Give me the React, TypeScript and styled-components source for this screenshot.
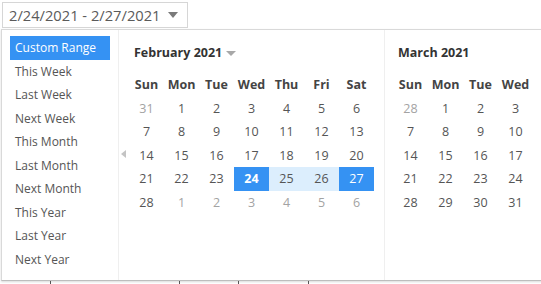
import styled, { createGlobalStyle } from "styled-components";

const GlobalStyle = createGlobalStyle`
  body {
    margin: 0;
    background: #fff;
    font-family: "Open Sans", "Noto Sans", sans-serif;
    overflow: hidden;
  }
`;

const RANGES = [
  "Custom Range",
  "This Week",
  "Last Week",
  "Next Week",
  "This Month",
  "Last Month",
  "Next Month",
  "This Year",
  "Last Year",
  "Next Year",
];

const DAYS = ["Sun", "Mon", "Tue", "Wed", "Thu", "Fri", "Sat"];

type Cell = { day: number; muted?: boolean; sel?: "start" | "mid" | "end" };

const febCells: Cell[] = [
  { day: 31, muted: true },
  ...Array.from({ length: 28 }, (_, i) => ({ day: i + 1 } as Cell)),
  ...[1, 2, 3, 4, 5, 6].map((d) => ({ day: d, muted: true })),
].map((c, i) => {
  if (i === 24) return { ...c, sel: "start" as const };
  if (i === 27) return { ...c, sel: "end" as const };
  if (i === 25 || i === 26) return { ...c, sel: "mid" as const };
  return c;
});

// March runs off the right edge of the window: only Sun-Wed are in view
const MAR_COLS = 4;
const marCells: Cell[] = [
  { day: 28, muted: true },
  ...Array.from({ length: 31 }, (_, i) => ({ day: i + 1 } as Cell)),
].filter((_, i) => i % 7 < MAR_COLS);

const App = () => {
  return (
    <Page>
      <GlobalStyle />
      <Picker>
        <PickerText>2/24/2021 - 2/27/2021</PickerText>
        <Caret />
      </Picker>
      <Popup>
        <Ranges>
          {RANGES.map((r, i) => (
            <RangeItem key={r} active={i === 0}>
              {r}
            </RangeItem>
          ))}
        </Ranges>
        <Month width={266} titleIndent={15} gridIndent={10}>
          <Title>
            February 2021 <TitleCaret />
          </Title>
          <PrevArrow />
          <DayGrid cols={7}>
            {DAYS.map((d) => (
              <Head key={d}>{d}</Head>
            ))}
            {febCells.map((c, i) => (
              <Day key={i} muted={c.muted} sel={c.sel}>
                {c.day}
              </Day>
            ))}
          </DayGrid>
        </Month>
        <Month width={156} titleIndent={13} gridIndent={8} last>
          <Title>March 2021</Title>
          <DayGrid cols={MAR_COLS}>
            {DAYS.slice(0, MAR_COLS).map((d) => (
              <Head key={d}>{d}</Head>
            ))}
            {marCells.map((c, i) => (
              <Day key={i} muted={c.muted}>
                {c.day}
              </Day>
            ))}
          </DayGrid>
        </Month>
      </Popup>
      <Ticks>
        <Tick />
        <Tick />
        <Tick />
        <Tick />
      </Ticks>
    </Page>
  );
};

export default App;

const Page = styled.div`
  width: 541px;
  height: 284px;
  padding: 2px 0 0 1px;
  box-sizing: border-box;
  overflow: hidden;
`;

const Picker = styled.div`
  margin-left: 1px;
  width: 186px;
  height: 26px;
  box-sizing: border-box;
  border: 1px solid #d6d6d6;
  display: flex;
  align-items: center;
  justify-content: space-between;
  padding: 0 9px 0 6px;
  background: #fff;
`;

const PickerText = styled.span`
  font-size: 14.7px;
  color: #5a5a5a;
  white-space: nowrap;
`;

const Caret = styled.span`
  width: 0;
  height: 0;
  border-left: 5px solid transparent;
  border-right: 5px solid transparent;
  border-top: 6px solid #7a7a7a;
`;

const Popup = styled.div`
  margin-top: 1px;
  width: 545px;
  height: 252px;
  box-sizing: border-box;
  border: 1px solid #d9d9d9;
  border-bottom-color: #bdbdbd;
  border-right: none;
  box-shadow: 0 1px 2px rgba(0, 0, 0, 0.15);
  background: #fff;
  display: flex;
`;

const Ranges = styled.div`
  width: 117px;
  flex-shrink: 0;
  box-sizing: border-box;
  padding: 6px 8px;
  border-right: 1px solid #efefef;
  display: flex;
  flex-direction: column;
`;

const RangeItem = styled.div<{ active?: boolean }>`
  height: 23.5px;
  line-height: 23.5px;
  padding: 0 5px;
  font-size: 12px;
  color: ${(p) => (p.active ? "#fff" : "#555")};
  background: ${(p) => (p.active ? "#3592f3" : "transparent")};
  white-space: nowrap;
`;

const Month = styled.div<{ width: number; titleIndent: number; gridIndent: number; last?: boolean }>`
  position: relative;
  width: ${(p) => p.width}px;
  flex-shrink: 0;
  box-sizing: border-box;
  border-right: ${(p) => (p.last ? "none" : "1px solid #efefef")};
  padding: 12px 0 0 ${(p) => p.gridIndent}px;

  & > div:first-child {
    padding-left: ${(p) => p.titleIndent - p.gridIndent}px;
  }
`;

const Title = styled.div`
  height: 20px;
  display: flex;
  align-items: center;
  gap: 4px;
  font-size: 12.5px;
  font-weight: 700;
  color: #333;
  margin-bottom: 11px;
`;

const TitleCaret = styled.span`
  width: 0;
  height: 0;
  margin-top: 2px;
  border-left: 5px solid transparent;
  border-right: 5px solid transparent;
  border-top: 5px solid #a8a8a8;
`;

const PrevArrow = styled.span`
  position: absolute;
  left: 2px;
  top: 120px;
  width: 0;
  height: 0;
  border-top: 4px solid transparent;
  border-bottom: 4px solid transparent;
  border-right: 5px solid #c4c4c4;
`;

const DayGrid = styled.div<{ cols: number }>`
  display: grid;
  grid-template-columns: repeat(${(p) => p.cols}, 35px);
  grid-auto-rows: 23.5px;
`;

const Head = styled.div`
  display: flex;
  align-items: center;
  justify-content: center;
  font-size: 12.5px;
  font-weight: 700;
  color: #444;
`;

const Day = styled.div<{ muted?: boolean; sel?: "start" | "mid" | "end" }>`
  display: flex;
  align-items: center;
  justify-content: center;
  font-size: 12.5px;
  color: ${(p) => (p.sel === "start" || p.sel === "end" ? "#fff" : p.muted ? "#a3a3a3" : "#555")};
  font-weight: ${(p) => (p.sel === "start" ? 700 : 400)};
  background: ${(p) =>
    p.sel === "start" || p.sel === "end" ? "#3592f3" : p.sel === "mid" ? "#dceefd" : "transparent"};
`;

const Ticks = styled.div`
  display: flex;
  padding-left: 49px;
`;

const Tick = styled.span`
  width: 1px;
  height: 3px;
  background: #555;
  &:nth-child(2) { margin-left: 128px; }
  &:nth-child(3) { margin-left: 58px; }
  &:nth-child(4) { margin-left: 69px; }
`;
